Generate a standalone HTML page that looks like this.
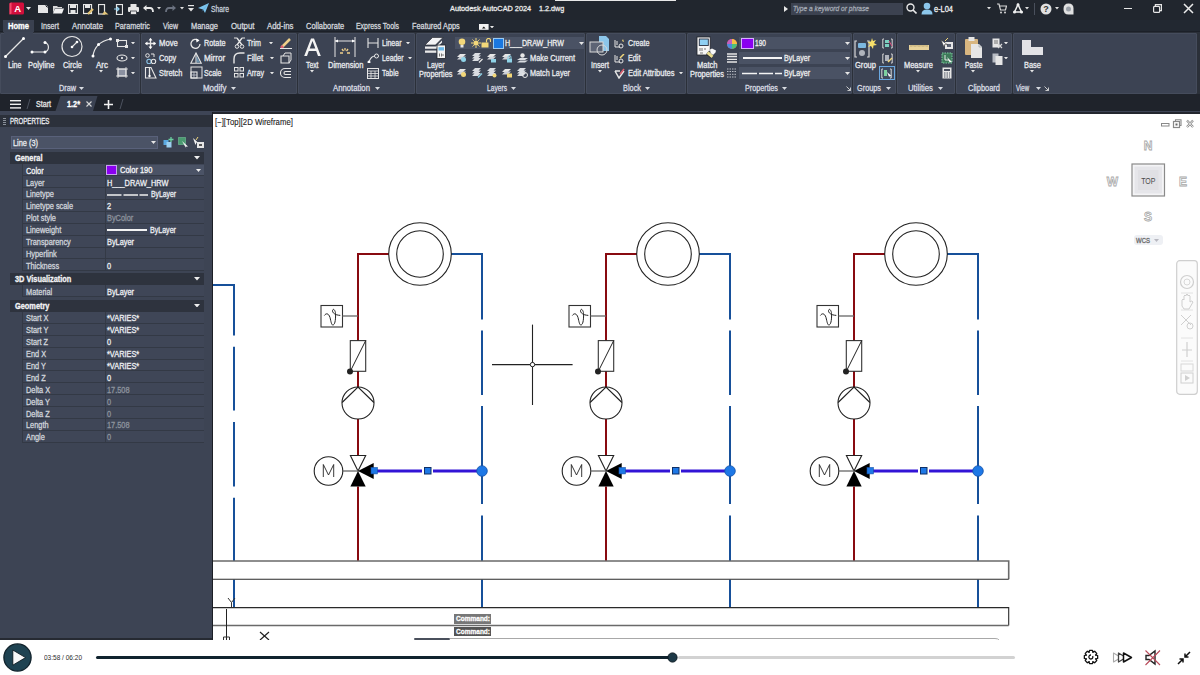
<!DOCTYPE html>
<html><head><meta charset="utf-8">
<style>
*{margin:0;padding:0;box-sizing:border-box}
html,body{width:1200px;height:675px;overflow:hidden;background:#fff;font-family:"Liberation Sans",sans-serif}
.a{position:absolute;display:block}
.t{position:absolute;white-space:nowrap;line-height:1;transform-origin:0 50%;-webkit-text-stroke:0.3px currentColor}
#vp{position:absolute;left:213px;top:114px;width:987px;height:526px;background:#fff;overflow:hidden}
</style></head><body>
<div class="a" style="left:0px;top:0px;width:1200px;height:20px;background:#21262e;"></div>
<svg class="a" style="left:9px;top:2px;" width="16" height="13" viewBox="0 0 16 13"><path d="M1.5,0.5 H13.5 Q15,0.5 15,2 V11 Q15,12.5 13.5,12.5 H1 L0.5,12 V1.5 Z" fill="#d20f3c"/><path d="M0.5,1.5 L2.5,0.5 V11.5 L0.5,12.5Z" fill="#f24a6c"/><text x="8.6" y="10" font-family="Liberation Sans" font-weight="bold" font-size="9.5" fill="#fff" text-anchor="middle">A</text></svg>
<svg class="a" style="left:25.5px;top:7.0px" width="5" height="3" viewBox="0 0 5 3"><polygon points="0,0 5,0 2.5,3" fill="#e8e8e8"/></svg>
<svg class="a" style="left:38px;top:5px;" width="10" height="8" viewBox="0 0 10 8"><path d="M0,0 H8 L10,2 V8 H0Z" fill="#e6e6e6"/><path d="M7.5,0.5 L9.5,2.5" stroke="#1f232b" stroke-width="1"/></svg>
<svg class="a" style="left:53px;top:5px;" width="11" height="9" viewBox="0 0 11 9"><path d="M0,1 H4 L5,2 H9 V3 H2 L0,8Z" fill="#d8d8d8"/><path d="M2,3.5 H11 L9,8.5 H0Z" fill="#f0f0f0"/></svg>
<svg class="a" style="left:68px;top:4px;" width="10" height="10" viewBox="0 0 10 10"><rect x="0.5" y="0.5" width="9" height="9" fill="none" stroke="#e6e6e6" stroke-width="1.2"/><rect x="2" y="1" width="6" height="3" fill="#e6e6e6"/><rect x="2.5" y="6" width="5" height="3.5" fill="#e6e6e6"/></svg>
<svg class="a" style="left:83px;top:4px;" width="11" height="11" viewBox="0 0 11 11"><rect x="0.5" y="0.5" width="8" height="9" fill="none" stroke="#e6e6e6" stroke-width="1.2"/><rect x="2" y="1" width="5" height="3" fill="#e6e6e6"/><path d="M5,10 L10,5" stroke="#e6c777" stroke-width="2.2"/></svg>
<svg class="a" style="left:98px;top:4px;" width="11" height="11" viewBox="0 0 11 11"><rect x="0.5" y="0.5" width="6" height="9.5" fill="none" stroke="#e6e6e6" stroke-width="1.2"/><path d="M4,10.5 L6.5,7 L10.5,10.5Z" fill="#e6c777"/></svg>
<svg class="a" style="left:114px;top:4px;" width="9" height="11" viewBox="0 0 9 11"><rect x="2.5" y="0.5" width="6" height="10" fill="none" stroke="#e6e6e6" stroke-width="1.2"/><path d="M0,5 H5 M3,3 L5,5 L3,7" stroke="#8fd0f0" stroke-width="1.2" fill="none"/></svg>
<svg class="a" style="left:128px;top:4px;" width="11" height="11" viewBox="0 0 11 11"><rect x="2.5" y="0" width="6" height="3" fill="#e6e6e6"/><rect x="0" y="3" width="11" height="5" rx="1" fill="#e6e6e6"/><rect x="2.5" y="7" width="6" height="3.5" fill="#e6e6e6" stroke="#1f232b" stroke-width="0.7"/></svg>
<svg class="a" style="left:143px;top:5px;" width="11" height="7" viewBox="0 0 11 7"><path d="M1,3 H7 Q10,3 10,7" stroke="#e8e8e8" stroke-width="1.8" fill="none"/><path d="M0,3 L3.5,0 V6Z" fill="#e8e8e8"/></svg>
<svg class="a" style="left:157.0px;top:7.2px" width="4" height="2.5" viewBox="0 0 4 2.5"><polygon points="0,0 4,0 2.0,2.5" fill="#e0e0e0"/></svg>
<svg class="a" style="left:165px;top:5px;" width="11" height="7" viewBox="0 0 11 7"><path d="M10,3 H4 Q1,3 1,7" stroke="#6b7280" stroke-width="1.8" fill="none"/><path d="M11,3 L7.5,0 V6Z" fill="#6b7280"/></svg>
<svg class="a" style="left:180.0px;top:7.2px" width="4" height="2.5" viewBox="0 0 4 2.5"><polygon points="0,0 4,0 2.0,2.5" fill="#e0e0e0"/></svg>
<svg class="a" style="left:188px;top:5px;" width="6" height="7" viewBox="0 0 6 7"><rect x="0" y="0" width="6" height="1.2" fill="#e6e6e6"/><polygon points="0,3 6,3 3,6.5" fill="#e6e6e6"/></svg>
<svg class="a" style="left:198px;top:3px;" width="11" height="11" viewBox="0 0 11 11"><path d="M0,5 L11,0 L7,10 L5,6.5Z" fill="#7cc4ee"/><path d="M5,6.5 L11,0 L3.5,9Z" fill="#4a9fd6"/></svg>
<div class="t" style="left:211.0px;top:4.66px;font-size:9px;color:#c6ceda;transform:scaleX(0.750);">Share</div>
<div class="t" style="left:450.0px;top:4.79px;font-size:7.9px;color:#ebebeb;transform:scaleX(0.930);">Autodesk AutoCAD 2024</div>
<div class="t" style="left:538.7px;top:4.79px;font-size:7.9px;color:#ebebeb;transform:scaleX(0.914);">1.2.dwg</div>
<div class="a" style="left:554.7px;top:0px;width:121.3px;height:1.2px;background:#e8e8e8;"></div>
<svg class="a" style="left:784px;top:6px;" width="4" height="6" viewBox="0 0 4 6"><polygon points="0,0 4,3 0,6" fill="#e6e6e6"/></svg>
<div class="a" style="left:791px;top:2.5px;width:111.5px;height:12.3px;background:#3c4250;"></div>
<div class="t" style="left:793.0px;top:4.74px;font-size:8px;color:#a3a9b3;font-style:italic;transform:scaleX(0.827);">Type a keyword or phrase</div>
<svg class="a" style="left:906px;top:3px;" width="11" height="11" viewBox="0 0 11 11"><circle cx="4.5" cy="4.5" r="3.5" fill="none" stroke="#e8e8e8" stroke-width="1.4"/><path d="M7,7 L10.5,10.5" stroke="#e8e8e8" stroke-width="1.6"/></svg>
<svg class="a" style="left:921px;top:2px;" width="12" height="13" viewBox="0 0 12 13"><circle cx="6" cy="4" r="3.3" fill="#8cc6ea"/><path d="M0.5,12.5 Q0.5,7.5 6,7.5 Q11.5,7.5 11.5,12.5Z" fill="#8cc6ea"/></svg>
<div class="t" style="left:934.0px;top:4.70px;font-size:8.5px;color:#f0f0f0;transform:scaleX(0.874);">e-L04</div>
<svg class="a" style="left:987.0px;top:7.2px" width="4" height="2.5" viewBox="0 0 4 2.5"><polygon points="0,0 4,0 2.0,2.5" fill="#e0e0e0"/></svg>
<svg class="a" style="left:997px;top:3px;" width="10" height="11" viewBox="0 0 10 11"><path d="M0,1 H2 L3.5,7 H8.5 L9.5,3 H3" stroke="#d8d8d8" stroke-width="1.2" fill="none"/><circle cx="4" cy="9.5" r="1" fill="#d8d8d8"/><circle cx="8" cy="9.5" r="1" fill="#d8d8d8"/></svg>
<svg class="a" style="left:1013px;top:3px;" width="10" height="11" viewBox="0 0 10 11"><path d="M5,1.5 L1.5,9 H8.5Z" stroke="#f0f0f0" stroke-width="1.5" fill="none"/><circle cx="5" cy="1.8" r="1.5" fill="#f0f0f0"/><circle cx="1.5" cy="9" r="1.5" fill="#f0f0f0"/><circle cx="8.5" cy="9" r="1.5" fill="#f0f0f0"/></svg>
<svg class="a" style="left:1025.0px;top:7.2px" width="4" height="2.5" viewBox="0 0 4 2.5"><polygon points="0,0 4,0 2.0,2.5" fill="#e0e0e0"/></svg>
<div class="a" style="left:1034px;top:3px;width:1px;height:12px;background:#4a505c;"></div>
<svg class="a" style="left:1040px;top:3px;" width="12" height="12" viewBox="0 0 12 12"><circle cx="6" cy="6" r="5.5" fill="#e0e0e0"/><text x="6" y="9.3" font-family="Liberation Sans" font-weight="bold" font-size="9" fill="#333" text-anchor="middle">?</text></svg>
<svg class="a" style="left:1055.0px;top:7.2px" width="4" height="2.5" viewBox="0 0 4 2.5"><polygon points="0,0 4,0 2.0,2.5" fill="#e0e0e0"/></svg>
<svg class="a" style="left:1063px;top:3px;" width="11" height="12" viewBox="0 0 11 12"><path d="M5.5,0.5 Q10.5,0.5 10.5,5.5 V11.5 H5.5 Q0.5,11.5 0.5,6 Q0.5,0.5 5.5,0.5Z" fill="#e0e0e0"/><circle cx="5.5" cy="6" r="2.5" fill="#9aa0a8"/></svg>
<div class="a" style="left:1124px;top:8px;width:8px;height:1.3px;background:#e6e6e6;"></div>
<svg class="a" style="left:1153px;top:4px;" width="9" height="9" viewBox="0 0 9 9"><rect x="0.6" y="2.4" width="6" height="6" rx="1" fill="none" stroke="#e6e6e6" stroke-width="1.2"/><path d="M2.4,2.4 V0.6 H8.4 V6.6 H6.6" fill="none" stroke="#e6e6e6" stroke-width="1.2"/></svg>
<svg class="a" style="left:1183px;top:3px;" width="11" height="11" viewBox="0 0 11 11"><path d="M1,1 L10,10 M10,1 L1,10" stroke="#ececec" stroke-width="1.5"/></svg>
<div class="a" style="left:0px;top:20px;width:1200px;height:12px;background:#222831;"></div>
<div class="a" style="left:0px;top:31px;width:1200px;height:1px;background:#1c2028;"></div>
<div class="a" style="left:2.5px;top:20px;width:31.5px;height:12px;background:#3a4150;"></div>
<div class="t" style="left:8.0px;top:22.00px;font-size:8.3px;color:#ffffff;font-weight:bold;transform:scaleX(0.911);">Home</div>
<div class="t" style="left:41.0px;top:22.00px;font-size:8.3px;color:#d2d6dc;transform:scaleX(0.867);">Insert</div>
<div class="t" style="left:72.0px;top:22.00px;font-size:8.3px;color:#d2d6dc;transform:scaleX(0.933);">Annotate</div>
<div class="t" style="left:115.0px;top:22.00px;font-size:8.3px;color:#d2d6dc;transform:scaleX(0.872);">Parametric</div>
<div class="t" style="left:163.0px;top:22.00px;font-size:8.3px;color:#d2d6dc;transform:scaleX(0.841);">View</div>
<div class="t" style="left:191.0px;top:22.00px;font-size:8.3px;color:#d2d6dc;transform:scaleX(0.900);">Manage</div>
<div class="t" style="left:230.5px;top:22.00px;font-size:8.3px;color:#d2d6dc;transform:scaleX(0.943);">Output</div>
<div class="t" style="left:266.6px;top:22.00px;font-size:8.3px;color:#d2d6dc;transform:scaleX(0.938);">Add-ins</div>
<div class="t" style="left:305.5px;top:22.00px;font-size:8.3px;color:#d2d6dc;transform:scaleX(0.898);">Collaborate</div>
<div class="t" style="left:356.0px;top:22.00px;font-size:8.3px;color:#d2d6dc;transform:scaleX(0.835);">Express Tools</div>
<div class="t" style="left:411.7px;top:22.00px;font-size:8.3px;color:#d2d6dc;transform:scaleX(0.884);">Featured Apps</div>
<svg class="a" style="left:478.5px;top:23.8px;" width="10" height="6" viewBox="0 0 10 6"><rect x="0" y="0" width="9.6" height="5.8" fill="#f2f2f2"/><polygon points="3,4.5 4.8,2.5 6.6,4.5" fill="#111"/></svg>
<svg class="a" style="left:490.0px;top:25.8px" width="4" height="2.5" viewBox="0 0 4 2.5"><polygon points="0,0 4,0 2.0,2.5" fill="#e8e8e8"/></svg>
<div class="a" style="left:0px;top:94px;width:1200px;height:17px;background:#1f232b;"></div>
<svg class="a" style="left:55px;top:96px;" width="43" height="15" viewBox="0 0 43 15"><polygon points="0.5,15 5.5,0 42.5,0 38,15" fill="#3b4252"/></svg>
<svg class="a" style="left:9.5px;top:99.5px;" width="11" height="9" viewBox="0 0 11 9"><rect x="0" y="0" width="11" height="1.4" fill="#f0f0f0"/><rect x="0" y="3.6" width="11" height="1.4" fill="#f0f0f0"/><rect x="0" y="7.2" width="11" height="1.4" fill="#f0f0f0"/></svg>
<svg class="a" style="left:26px;top:98px;" width="5" height="12" viewBox="0 0 5 12"><path d="M1,11 L4,1" stroke="#4d5360" stroke-width="1"/></svg>
<svg class="a" style="left:119px;top:98px;" width="5" height="12" viewBox="0 0 5 12"><path d="M1,11 L4,1" stroke="#4d5360" stroke-width="1"/></svg>
<div class="t" style="left:36.0px;top:99.90px;font-size:8.5px;color:#e6e6e6;transform:scaleX(0.836);">Start</div>
<div class="t" style="left:67.0px;top:99.90px;font-size:8.5px;color:#ffffff;font-weight:bold;transform:scaleX(0.860);">1.2*</div>
<svg class="a" style="left:85.5px;top:101px;" width="6" height="6" viewBox="0 0 6 6"><path d="M0.5,0.5 L5.5,5.5 M5.5,0.5 L0.5,5.5" stroke="#d8d8d8" stroke-width="1.1"/></svg>
<svg class="a" style="left:103.5px;top:99.5px;" width="9" height="9" viewBox="0 0 9 9"><path d="M4.5,0 V9 M0,4.5 H9" stroke="#f2f2f2" stroke-width="1.6"/></svg>
<div class="a" style="left:0px;top:111px;width:1200px;height:4px;background:#3e4556;"></div>
<div class="a" style="left:212px;top:112px;width:988px;height:2px;background:#23262e;"></div>

<div class="a" style="left:0px;top:32px;width:1200px;height:62px;background:#2b3039;"></div>
<div class="a" style="left:0px;top:32.5px;width:140px;height:61px;background:#3c4353;border:1px solid #454c5c;border-radius:1px"></div>
<div class="a" style="left:141px;top:32.5px;width:156px;height:61px;background:#3c4353;border:1px solid #454c5c;border-radius:1px"></div>
<div class="a" style="left:298px;top:32.5px;width:117px;height:61px;background:#3c4353;border:1px solid #454c5c;border-radius:1px"></div>
<div class="a" style="left:416px;top:32.5px;width:169px;height:61px;background:#3c4353;border:1px solid #454c5c;border-radius:1px"></div>
<div class="a" style="left:586px;top:32.5px;width:100px;height:61px;background:#3c4353;border:1px solid #454c5c;border-radius:1px"></div>
<div class="a" style="left:687px;top:32.5px;width:165px;height:61px;background:#3c4353;border:1px solid #454c5c;border-radius:1px"></div>
<div class="a" style="left:853px;top:32.5px;width:43px;height:61px;background:#3c4353;border:1px solid #454c5c;border-radius:1px"></div>
<div class="a" style="left:897px;top:32.5px;width:58px;height:61px;background:#3c4353;border:1px solid #454c5c;border-radius:1px"></div>
<div class="a" style="left:956px;top:32.5px;width:56px;height:61px;background:#3c4353;border:1px solid #454c5c;border-radius:1px"></div>
<div class="a" style="left:1013px;top:32.5px;width:184px;height:61px;background:#3c4353;border:1px solid #454c5c;border-radius:1px"></div>
<div class="a" style="left:3.5px;top:31.5px;width:29.5px;height:2.5px;background:#3c4353;"></div>
<svg class="a" style="left:3px;top:36px;" width="24" height="23" viewBox="0 0 24 23"><path d="M2.5,20.5 L20.5,2.5" stroke="#e6e6e6" stroke-width="1.2"/><circle cx="2.5" cy="20.5" r="1.5" fill="#fff"/><circle cx="20.5" cy="2.5" r="1.5" fill="#fff"/></svg>
<div class="t" style="left:7.5px;top:60.50px;font-size:8.3px;color:#e8eaee;transform:scaleX(0.860);">Line</div>
<svg class="a" style="left:30px;top:40px;" width="22" height="14" viewBox="0 0 22 14"><path d="M2,12 H15 A5,5 0 0 0 15,2.5" stroke="#e6e6e6" stroke-width="1.2" fill="none"/><circle cx="2" cy="12" r="1.5" fill="#fff"/><circle cx="15" cy="12" r="1.5" fill="#fff"/><circle cx="15" cy="2.5" r="1.5" fill="#fff"/></svg>
<div class="t" style="left:28.0px;top:60.50px;font-size:8.3px;color:#e8eaee;transform:scaleX(0.912);">Polyline</div>
<svg class="a" style="left:61px;top:35px;" width="22" height="23" viewBox="0 0 22 23"><circle cx="11" cy="11.5" r="10" stroke="#e6e6e6" stroke-width="1.2" fill="none"/><path d="M11,12 L16,7" stroke="#e6e6e6" stroke-width="1.1"/><circle cx="11" cy="12" r="1.3" fill="#fff"/><circle cx="16" cy="7" r="1.3" fill="#fff"/></svg>
<div class="t" style="left:63.0px;top:60.50px;font-size:8.3px;color:#e8eaee;transform:scaleX(0.896);">Circle</div>
<svg class="a" style="left:70.0px;top:70.0px" width="4" height="2.5" viewBox="0 0 4 2.5"><polygon points="0,0 4,0 2.0,2.5" fill="#e6e6e6"/></svg>
<svg class="a" style="left:91px;top:37px;" width="22" height="21" viewBox="0 0 22 21"><path d="M2,19 Q4,5 19.5,2" stroke="#e6e6e6" stroke-width="1.2" fill="none"/><circle cx="2" cy="19" r="1.5" fill="#fff"/><circle cx="7.5" cy="7.5" r="1.5" fill="#fff"/><circle cx="19.5" cy="2" r="1.5" fill="#fff"/></svg>
<div class="t" style="left:95.5px;top:60.50px;font-size:8.3px;color:#e8eaee;transform:scaleX(0.964);">Arc</div>
<svg class="a" style="left:99.0px;top:70.0px" width="4" height="2.5" viewBox="0 0 4 2.5"><polygon points="0,0 4,0 2.0,2.5" fill="#e6e6e6"/></svg>
<svg class="a" style="left:116px;top:39px;" width="12" height="9" viewBox="0 0 12 9"><rect x="1.5" y="1.5" width="9" height="6" stroke="#e6e6e6" stroke-width="1.1" fill="none"/><rect x="0" y="0" width="3" height="3" fill="#e6e6e6"/><rect x="9" y="6" width="3" height="3" fill="#e6e6e6"/></svg>
<svg class="a" style="left:116px;top:54px;" width="12" height="8" viewBox="0 0 12 8"><ellipse cx="6" cy="4" rx="5" ry="3" stroke="#e6e6e6" stroke-width="1.1" fill="none"/><circle cx="6" cy="4" r="1" fill="#fff"/></svg>
<svg class="a" style="left:116px;top:67px;" width="12" height="11" viewBox="0 0 12 11"><rect x="2" y="2" width="8" height="7" fill="#8a90a0" stroke="#e6e6e6" stroke-width="1"/><path d="M0,2 H12 M0,9 H12 M2,0 V11 M10,0 V11" stroke="#e6e6e6" stroke-width="0.8"/></svg>
<svg class="a" style="left:131.0px;top:41.8px" width="4" height="2.5" viewBox="0 0 4 2.5"><polygon points="0,0 4,0 2.0,2.5" fill="#e6e6e6"/></svg>
<svg class="a" style="left:131.0px;top:56.8px" width="4" height="2.5" viewBox="0 0 4 2.5"><polygon points="0,0 4,0 2.0,2.5" fill="#e6e6e6"/></svg>
<svg class="a" style="left:131.0px;top:71.8px" width="4" height="2.5" viewBox="0 0 4 2.5"><polygon points="0,0 4,0 2.0,2.5" fill="#e6e6e6"/></svg>
<div class="t" style="left:58.5px;top:84.00px;font-size:8.3px;color:#d9dce2;transform:scaleX(0.878);">Draw</div>
<svg class="a" style="left:79.0px;top:87.0px" width="5" height="3" viewBox="0 0 5 3"><polygon points="0,0 5,0 2.5,3" fill="#d9dce2"/></svg>
<svg class="a" style="left:145px;top:38px;" width="11" height="11" viewBox="0 0 11 11"><path d="M5.5,0.5 V10.5 M0.5,5.5 H10.5" stroke="#e6e6e6" stroke-width="1.3"/><path d="M5.5,0 L3.5,2.5 H7.5Z M5.5,11 L3.5,8.5 H7.5Z M0,5.5 L2.5,3.5 V7.5Z M11,5.5 L8.5,3.5 V7.5Z" fill="#fff"/></svg>
<div class="t" style="left:158.7px;top:39.30px;font-size:8.3px;color:#e8eaee;transform:scaleX(0.926);">Move</div>
<svg class="a" style="left:190px;top:38px;" width="11" height="11" viewBox="0 0 11 11"><path d="M8.5,2.5 A4.5,4.5 0 1 0 10,6" stroke="#e6e6e6" stroke-width="1.3" fill="none"/><path d="M6,0.5 L9.5,2.5 L6.5,4.5Z" fill="#fff"/></svg>
<div class="t" style="left:203.5px;top:39.30px;font-size:8.3px;color:#e8eaee;transform:scaleX(0.879);">Rotate</div>
<svg class="a" style="left:234px;top:37px;" width="11" height="12" viewBox="0 0 11 12"><path d="M0,1 H3 M8,1 H11" stroke="#e6e6e6" stroke-width="1"/><path d="M3,1 L8,8 M8,1 L3,8" stroke="#e6e6e6" stroke-width="1.3"/><circle cx="3" cy="9.5" r="1.8" stroke="#e6e6e6" fill="none"/><circle cx="8" cy="9.5" r="1.8" stroke="#e6e6e6" fill="none"/></svg>
<div class="t" style="left:247.0px;top:39.30px;font-size:8.3px;color:#e8eaee;transform:scaleX(0.860);">Trim</div>
<svg class="a" style="left:145px;top:53px;" width="12" height="11" viewBox="0 0 12 11"><circle cx="2.5" cy="2.5" r="1.8" stroke="#e6e6e6" stroke-width="1" fill="none"/><path d="M6,1 H9 V4" stroke="#e6e6e6" stroke-width="1" fill="none"/><circle cx="4" cy="8.5" r="2.2" stroke="#8cc6ea" stroke-width="1.1" fill="none"/><circle cx="8.5" cy="8.5" r="2.2" stroke="#e6e6e6" stroke-width="1.1" fill="none"/></svg>
<div class="t" style="left:158.7px;top:54.30px;font-size:8.3px;color:#e8eaee;transform:scaleX(0.893);">Copy</div>
<svg class="a" style="left:189.5px;top:52px;" width="12" height="12" viewBox="0 0 12 12"><path d="M0.8,11.2 L6,1 L11.2,11.2Z" fill="none" stroke="#e6e6e6" stroke-width="1.1"/><path d="M6,1.5 V11" stroke="#e6e6e6" stroke-width="1"/><path d="M6.5,4 L10,10.5 H6.5Z" fill="#8cc6ea" opacity="0.6"/></svg>
<div class="t" style="left:203.5px;top:54.30px;font-size:8.3px;color:#e8eaee;transform:scaleX(0.979);">Mirror</div>
<svg class="a" style="left:233px;top:52px;" width="12" height="12" viewBox="0 0 12 12"><path d="M1,11.5 V7 Q1,1 7,1 H11.5" stroke="#e6e6e6" stroke-width="1.4" fill="none"/></svg>
<div class="t" style="left:246.7px;top:54.30px;font-size:8.3px;color:#e8eaee;transform:scaleX(0.913);">Fillet</div>
<svg class="a" style="left:144px;top:66px;" width="13" height="13" viewBox="0 0 13 13"><path d="M1.5,1.5 H7 L12,12 H1.5Z" fill="none" stroke="#e6e6e6" stroke-width="1.1"/><path d="M5.5,2 V10" stroke="#e6e6e6" stroke-width="1.3"/><circle cx="5.5" cy="10" r="1.2" fill="#fff"/></svg>
<div class="t" style="left:158.7px;top:69.30px;font-size:8.3px;color:#e8eaee;transform:scaleX(0.886);">Stretch</div>
<svg class="a" style="left:189.5px;top:66px;" width="13" height="13" viewBox="0 0 13 13"><rect x="1" y="1" width="11" height="11" stroke="#e6e6e6" stroke-width="1" fill="none"/><rect x="1" y="6" width="6" height="6" stroke="#e6e6e6" stroke-width="1.1" fill="none"/><path d="M4,6 V12 M1,9 H7" stroke="#c8ccd4" stroke-width="0.8"/></svg>
<div class="t" style="left:203.5px;top:69.30px;font-size:8.3px;color:#e8eaee;transform:scaleX(0.843);">Scale</div>
<svg class="a" style="left:234px;top:67px;" width="10" height="11" viewBox="0 0 10 11"><rect x="0.5" y="0.5" width="3.5" height="3.5" stroke="#e6e6e6" fill="none"/><rect x="6" y="0.5" width="3.5" height="3.5" stroke="#e6e6e6" fill="none"/><rect x="0.5" y="6.5" width="3.5" height="3.5" stroke="#e6e6e6" fill="none"/><rect x="6" y="6.5" width="3.5" height="3.5" stroke="#e6e6e6" fill="none"/></svg>
<div class="t" style="left:247.0px;top:69.30px;font-size:8.3px;color:#e8eaee;transform:scaleX(0.857);">Array</div>
<svg class="a" style="left:268.5px;top:41.8px" width="4" height="2.5" viewBox="0 0 4 2.5"><polygon points="0,0 4,0 2.0,2.5" fill="#e6e6e6"/></svg>
<svg class="a" style="left:269.5px;top:56.8px" width="4" height="2.5" viewBox="0 0 4 2.5"><polygon points="0,0 4,0 2.0,2.5" fill="#e6e6e6"/></svg>
<svg class="a" style="left:269.5px;top:71.8px" width="4" height="2.5" viewBox="0 0 4 2.5"><polygon points="0,0 4,0 2.0,2.5" fill="#e6e6e6"/></svg>
<svg class="a" style="left:280px;top:37px;" width="12" height="12" viewBox="0 0 12 12"><path d="M2,10 L10,2" stroke="#f0d08a" stroke-width="2.5"/><path d="M1,11 L3,9" stroke="#e06070" stroke-width="2.5"/><path d="M0,11.5 H12" stroke="#e6e6e6" stroke-width="1"/></svg>
<svg class="a" style="left:280px;top:52px;" width="12" height="12" viewBox="0 0 12 12"><path d="M1,4 H9 V11 H1Z" stroke="#e6e6e6" stroke-width="1.1" fill="none"/><path d="M3,4 L5,1 H11 V8 L9,11" stroke="#e6e6e6" stroke-width="1" fill="none"/></svg>
<svg class="a" style="left:280px;top:67px;" width="12" height="12" viewBox="0 0 12 12"><path d="M11,1.5 H5 A4.5,4.5 0 0 0 5,10.5 H11 M11,4.5 H5.5 A1.5,1.5 0 0 0 5.5,7.5 H11" stroke="#e6e6e6" stroke-width="1.1" fill="none"/></svg>
<div class="t" style="left:203.3px;top:84.00px;font-size:8.3px;color:#d9dce2;transform:scaleX(0.957);">Modify</div>
<svg class="a" style="left:231.0px;top:87.0px" width="5" height="3" viewBox="0 0 5 3"><polygon points="0,0 5,0 2.5,3" fill="#d9dce2"/></svg>
<svg class="a" style="left:303px;top:37px;" width="19" height="21" viewBox="0 0 19 21"><path d="M1.2,19 L8,1.5 H11 L17.8,19 H15 L13.2,14 H5.8 L4,19Z M6.7,11.5 H12.3 L9.5,4Z" fill="#f4f4f4" fill-rule="evenodd"/></svg>
<div class="t" style="left:306.0px;top:60.50px;font-size:8.3px;color:#e8eaee;transform:scaleX(0.821);">Text</div>
<svg class="a" style="left:310.0px;top:70.0px" width="4" height="2.5" viewBox="0 0 4 2.5"><polygon points="0,0 4,0 2.0,2.5" fill="#e6e6e6"/></svg>
<svg class="a" style="left:334px;top:37px;" width="22" height="21" viewBox="0 0 22 21"><path d="M1,0 V20 M21,0 V20 M1,4 H21" stroke="#e6e6e6" stroke-width="1"/><path d="M1,4 L4,2.5 V5.5Z M21,4 L18,2.5 V5.5Z" fill="#fff"/><path d="M6,16 H9 M13,16 H16 M8,12 L9.5,14 M14,12 L12.5,14 M11,11 V13.5" stroke="#f0d08a" stroke-width="1.3"/></svg>
<div class="t" style="left:327.5px;top:60.50px;font-size:8.3px;color:#e8eaee;transform:scaleX(0.905);">Dimension</div>
<svg class="a" style="left:367px;top:38px;" width="12" height="10" viewBox="0 0 12 10"><path d="M1,0 V10 M11,0 V10 M1,5 H11" stroke="#e6e6e6" stroke-width="1.1"/></svg>
<div class="t" style="left:381.5px;top:39.30px;font-size:8.3px;color:#e8eaee;transform:scaleX(0.845);">Linear</div>
<svg class="a" style="left:367px;top:53px;" width="12" height="10" viewBox="0 0 12 10"><path d="M2,9 Q4,3 8,3" stroke="#e6e6e6" stroke-width="1.1" fill="none"/><circle cx="9.5" cy="3" r="2" stroke="#e6e6e6" fill="none"/><circle cx="2" cy="9" r="1.5" fill="#fff"/></svg>
<div class="t" style="left:381.5px;top:54.30px;font-size:8.3px;color:#e8eaee;transform:scaleX(0.832);">Leader</div>
<svg class="a" style="left:367px;top:68px;" width="12" height="11" viewBox="0 0 12 11"><rect x="0.5" y="0.5" width="11" height="10" stroke="#e6e6e6" stroke-width="1" fill="none"/><path d="M0.5,3 H11.5 M0.5,5.5 H11.5 M0.5,8 H11.5 M4,3 V10.5 M8,3 V10.5" stroke="#e6e6e6" stroke-width="0.8"/></svg>
<div class="t" style="left:381.5px;top:69.30px;font-size:8.3px;color:#e8eaee;transform:scaleX(0.832);">Table</div>
<svg class="a" style="left:406.0px;top:41.8px" width="4" height="2.5" viewBox="0 0 4 2.5"><polygon points="0,0 4,0 2.0,2.5" fill="#e6e6e6"/></svg>
<svg class="a" style="left:408.0px;top:56.8px" width="4" height="2.5" viewBox="0 0 4 2.5"><polygon points="0,0 4,0 2.0,2.5" fill="#e6e6e6"/></svg>
<div class="t" style="left:333.0px;top:84.00px;font-size:8.3px;color:#d9dce2;transform:scaleX(0.932);">Annotation</div>
<svg class="a" style="left:374.5px;top:87.0px" width="5" height="3" viewBox="0 0 5 3"><polygon points="0,0 5,0 2.5,3" fill="#d9dce2"/></svg>
<svg class="a" style="left:424px;top:36px;" width="22" height="23" viewBox="0 0 22 23"><polygon points="1,9 8.5,1.5 19,1.5 11.5,9" fill="#f2f2f4" stroke="#1e2128" stroke-width="0.6"/><polygon points="1,10.5 11.8,10.5 18,4.5 18,6.5 12.5,12.8 1,12.8" fill="#eeeeee"/><polygon points="1,14.5 12.5,14.5 12.5,16.8 1,16.8" fill="#e8e8e8"/><rect x="13" y="9" width="8.5" height="13.5" fill="#f4f4f4" stroke="#1e2128" stroke-width="0.8"/><rect x="14.5" y="11.2" width="5.5" height="3.3" fill="#6cb8e8"/><path d="M15.5,17.5 V20.5 M17.5,17.5 V20.5 M19,18 V20" stroke="#777" stroke-width="1"/></svg>
<div class="t" style="left:427.0px;top:60.50px;font-size:8.3px;color:#e8eaee;transform:scaleX(0.843);">Layer</div>
<div class="t" style="left:418.5px;top:69.50px;font-size:8.3px;color:#e8eaee;transform:scaleX(0.886);">Properties</div>
<div class="a" style="left:455px;top:36.7px;width:129px;height:12.5px;background:#4a5264;"></div>
<svg class="a" style="left:458px;top:38px;" width="9" height="10" viewBox="0 0 9 10"><circle cx="4" cy="3.8" r="3.3" fill="#f2d77a"/><rect x="2.5" y="7" width="3" height="2.5" fill="#e6e6e6"/></svg>
<svg class="a" style="left:471px;top:37.5px;" width="10" height="10" viewBox="0 0 10 10"><circle cx="5" cy="5" r="2.6" fill="#f2d77a"/><path d="M5,0 V2 M5,8 V10 M0,5 H2 M8,5 H10 M1.5,1.5 L2.8,2.8 M7.2,7.2 L8.5,8.5 M8.5,1.5 L7.2,2.8 M1.5,8.5 L2.8,7.2" stroke="#f2d77a" stroke-width="1"/></svg>
<svg class="a" style="left:481px;top:37.5px;" width="10" height="10" viewBox="0 0 10 10"><rect x="0.5" y="4.5" width="7" height="5" fill="#f2d77a"/><path d="M5.5,4.5 V2.5 A2,2 0 0 1 9.5,2.5 V4" stroke="#f2d77a" stroke-width="1.2" fill="none"/></svg>
<div class="a" style="left:494px;top:38.5px;width:8.5px;height:9px;background:#1a78e0;outline:1px solid #9ccaf0"></div>
<div class="t" style="left:505.0px;top:39.00px;font-size:8.3px;color:#eeeeee;transform:scaleX(0.853);">H___DRAW_HRW</div>
<svg class="a" style="left:578.5px;top:41.5px" width="5" height="3" viewBox="0 0 5 3"><polygon points="0,0 5,0 2.5,3" fill="#e6e6e6"/></svg>
<svg class="a" style="left:457px;top:53px;" width="10" height="10" viewBox="0 0 10 10"><path d="M0,4 L3,1 H9 L6,4Z" fill="#e6e6e6"/><path d="M0,6.5 L3,3.5 H9 L6,6.5Z" fill="#cfd2d8"/><circle cx="6.5" cy="6.5" r="2.5" fill="#8fd3e8"/></svg>
<svg class="a" style="left:472px;top:53px;" width="11" height="10" viewBox="0 0 11 10"><path d="M0,3 L3,0 H9 L6,3Z M0,5.5 L3,2.5 H9 L6,5.5Z M0,8 L3,5 H9 L6,8Z" fill="#dadde2"/><path d="M7,9.5 L10.5,6" stroke="#e6e6e6" stroke-width="1.2"/></svg>
<svg class="a" style="left:487px;top:53px;" width="10" height="10" viewBox="0 0 10 10"><path d="M0,4 L3,1 H9 L6,4Z" fill="#e6e6e6"/><path d="M0,6.5 L3,3.5 H9 L6,6.5Z" fill="#cfd2d8"/><rect x="4" y="6" width="5" height="3.5" fill="#8fd3e8"/></svg>
<svg class="a" style="left:502px;top:53px;" width="10" height="10" viewBox="0 0 10 10"><path d="M0,4 L3,1 H9 L6,4Z" fill="#e6e6e6"/><path d="M0,6.5 L3,3.5 H9 L6,6.5Z" fill="#cfd2d8"/><rect x="5" y="5.5" width="5" height="4" fill="#8fd3e8"/><path d="M6,5.5 V4 A1.5,1.5 0 0 1 9,4 V5.5" stroke="#8fd3e8" fill="none"/></svg>
<svg class="a" style="left:517px;top:52.5px;" width="11" height="11" viewBox="0 0 11 11"><circle cx="5.5" cy="2.5" r="2.2" fill="#e6e6e6"/><path d="M0,7 L3,5 H11 L8,7Z M0,9.5 L3,7.5 H11 L8,9.5Z" fill="#dadde2"/></svg>
<div class="t" style="left:530.0px;top:54.30px;font-size:8.3px;color:#e8eaee;transform:scaleX(0.895);">Make Current</div>
<svg class="a" style="left:457px;top:68px;" width="10" height="10" viewBox="0 0 10 10"><path d="M0,4 L3,1 H9 L6,4Z" fill="#e6e6e6"/><path d="M0,6.5 L3,3.5 H9 L6,6.5Z" fill="#cfd2d8"/><circle cx="6.5" cy="6.5" r="2.5" fill="#f2d77a"/></svg>
<svg class="a" style="left:472px;top:68px;" width="11" height="10" viewBox="0 0 11 10"><path d="M0,3 L3,0 H9 L6,3Z M0,5.5 L3,2.5 H9 L6,5.5Z M0,8 L3,5 H9 L6,8Z" fill="#dadde2"/><path d="M6,9.5 L10,5.5" stroke="#8fd3e8" stroke-width="1.2"/></svg>
<svg class="a" style="left:487px;top:68px;" width="10" height="10" viewBox="0 0 10 10"><path d="M0,3 L3,0 H9 L6,3Z M0,5.5 L3,2.5 H9 L6,5.5Z M0,8 L3,5 H9 L6,8Z" fill="#dadde2"/><circle cx="7.5" cy="7.5" r="2" fill="#f2d77a"/></svg>
<svg class="a" style="left:502px;top:68px;" width="10" height="10" viewBox="0 0 10 10"><path d="M0,4 L3,1 H9 L6,4Z" fill="#e6e6e6"/><path d="M0,6.5 L3,3.5 H9 L6,6.5Z" fill="#cfd2d8"/><rect x="5" y="5.5" width="5" height="4" fill="#f2d77a"/></svg>
<svg class="a" style="left:517px;top:68px;" width="11" height="10" viewBox="0 0 11 10"><path d="M0,3 L3,0 H9 L6,3Z M0,5.5 L3,2.5 H9 L6,5.5Z M0,8 L3,5 H9 L6,8Z" fill="#dadde2"/><circle cx="8" cy="7" r="2.5" stroke="#e6e6e6" fill="none"/></svg>
<div class="t" style="left:530.0px;top:69.30px;font-size:8.3px;color:#e8eaee;transform:scaleX(0.876);">Match Layer</div>
<div class="t" style="left:486.5px;top:84.00px;font-size:8.3px;color:#d9dce2;transform:scaleX(0.803);">Layers</div>
<svg class="a" style="left:510.5px;top:87.0px" width="5" height="3" viewBox="0 0 5 3"><polygon points="0,0 5,0 2.5,3" fill="#d9dce2"/></svg>
<svg class="a" style="left:589px;top:35px;" width="21" height="22" viewBox="0 0 21 22"><path d="M10,1 H17 L20,4 V16 H10Z" fill="#8cc6ea"/><rect x="1" y="7" width="13" height="10" fill="#5d6475" stroke="#d8d8d8" stroke-width="1"/><circle cx="13" cy="15" r="5" stroke="#d8d8d8" stroke-width="1" fill="none"/></svg>
<div class="t" style="left:590.5px;top:60.50px;font-size:8.3px;color:#e8eaee;transform:scaleX(0.867);">Insert</div>
<svg class="a" style="left:598.0px;top:70.0px" width="4" height="2.5" viewBox="0 0 4 2.5"><polygon points="0,0 4,0 2.0,2.5" fill="#e6e6e6"/></svg>
<svg class="a" style="left:614px;top:39px;" width="11" height="10" viewBox="0 0 11 10"><path d="M1,1 V8 H6 M3,2 V6" stroke="#e6e6e6" fill="none"/><circle cx="7" cy="7" r="2" stroke="#e6e6e6" fill="none"/><path d="M9,0 L10,3 L8,2Z" fill="#f2d77a"/></svg>
<div class="t" style="left:627.5px;top:39.30px;font-size:8.3px;color:#e8eaee;transform:scaleX(0.863);">Create</div>
<svg class="a" style="left:614px;top:54px;" width="11" height="10" viewBox="0 0 11 10"><path d="M1,1 V8 H6 M3,2 V6" stroke="#e6e6e6" fill="none"/><circle cx="7" cy="7" r="2" stroke="#e6e6e6" fill="none"/><path d="M6,4 L10,0" stroke="#f2d77a" stroke-width="1.5"/></svg>
<div class="t" style="left:627.5px;top:54.30px;font-size:8.3px;color:#e8eaee;transform:scaleX(0.874);">Edit</div>
<svg class="a" style="left:614px;top:68px;" width="11" height="11" viewBox="0 0 11 11"><path d="M1,3 L5,10 L10,3 M1,3 H6" stroke="#e6e6e6" stroke-width="1.5" fill="none"/><path d="M6,6 L10,1" stroke="#e06070" stroke-width="1.5"/></svg>
<div class="t" style="left:627.5px;top:69.30px;font-size:8.3px;color:#e8eaee;transform:scaleX(0.908);">Edit Attributes</div>
<svg class="a" style="left:679.0px;top:71.8px" width="4" height="2.5" viewBox="0 0 4 2.5"><polygon points="0,0 4,0 2.0,2.5" fill="#e6e6e6"/></svg>
<div class="t" style="left:623.0px;top:84.00px;font-size:8.3px;color:#d9dce2;transform:scaleX(0.887);">Block</div>
<svg class="a" style="left:644.5px;top:87.0px" width="5" height="3" viewBox="0 0 5 3"><polygon points="0,0 5,0 2.5,3" fill="#d9dce2"/></svg>
<svg class="a" style="left:696px;top:36px;" width="22" height="23" viewBox="0 0 22 23"><rect x="1" y="1" width="13.2" height="18" fill="#f6f6f6" stroke="#1e2128" stroke-width="0.8"/><rect x="3.3" y="3" width="9" height="6.5" fill="#8fd0f4" stroke="#2a3040" stroke-width="0.9"/><path d="M4,12 V15 M6,12 V15 M8,13 H10 M4,17 H7" stroke="#666" stroke-width="0.9"/><path d="M11.5,16.5 L16.5,20.8" stroke="#1e2128" stroke-width="4.5"/><path d="M11.5,16.5 L16.5,20.8" stroke="#e8dc90" stroke-width="3"/><polygon points="14,13.5 16,12.5 20,14.5 19.5,16.5 17,19 14.5,17" fill="#f8f8f8"/></svg>
<div class="t" style="left:696.5px;top:60.50px;font-size:8.3px;color:#e8eaee;transform:scaleX(0.907);">Match</div>
<div class="t" style="left:689.5px;top:69.50px;font-size:8.3px;color:#e8eaee;transform:scaleX(0.899);">Properties</div>
<svg class="a" style="left:727px;top:38.5px;" width="10" height="10" viewBox="0 0 10 10"><circle cx="5" cy="5" r="5" fill="#e8555a"/><path d="M5,5 L5,0 A5,5 0 0 1 10,5Z" fill="#f4c044"/><path d="M5,5 L10,5 A5,5 0 0 1 5,10Z" fill="#4fc078"/><path d="M5,5 L5,10 A5,5 0 0 1 0,5Z" fill="#4a8ee0"/><path d="M5,5 L0,5 A5,5 0 0 1 5,0Z" fill="#c060c0"/></svg>
<svg class="a" style="left:727px;top:53px;" width="10" height="10" viewBox="0 0 10 10"><path d="M0,1 H10 M0,3.5 H10 M0,6.3 H10 M0,9 H10" stroke="#e6e6e6" stroke-width="1.3"/></svg>
<svg class="a" style="left:727px;top:68px;" width="10" height="10" viewBox="0 0 10 10"><path d="M0,1 H10 M0,3.5 H10 M0,6.3 H10 M0,9 H10" stroke="#b8bcc4" stroke-width="1" stroke-dasharray="1.5 1"/></svg>
<div class="a" style="left:739px;top:37.2px;width:111px;height:11.5px;background:#4a5264;"></div>
<svg class="a" style="left:844.5px;top:41.5px" width="5" height="3" viewBox="0 0 5 3"><polygon points="0,0 5,0 2.5,3" fill="#e6e6e6"/></svg>
<div class="a" style="left:739px;top:52.4px;width:111px;height:11.5px;background:#4a5264;"></div>
<svg class="a" style="left:844.5px;top:56.7px" width="5" height="3" viewBox="0 0 5 3"><polygon points="0,0 5,0 2.5,3" fill="#e6e6e6"/></svg>
<div class="a" style="left:739px;top:67.3px;width:111px;height:11.5px;background:#4a5264;"></div>
<svg class="a" style="left:844.5px;top:71.6px" width="5" height="3" viewBox="0 0 5 3"><polygon points="0,0 5,0 2.5,3" fill="#e6e6e6"/></svg>
<div class="a" style="left:742px;top:39px;width:11px;height:9px;background:#8a00f0;outline:1px solid #d8b0ff"></div>
<div class="t" style="left:755.0px;top:39.00px;font-size:8.3px;color:#eeeeee;transform:scaleX(0.794);">190</div>
<div class="a" style="left:742.5px;top:57.2px;width:39.5px;height:2.2px;background:#f4f4f4;"></div>
<div class="t" style="left:783.5px;top:54.30px;font-size:8.3px;color:#eeeeee;transform:scaleX(0.854);">ByLayer</div>
<svg class="a" style="left:742px;top:72px;" width="41" height="3" viewBox="0 0 41 3"><path d="M0,1.5 H15 M17,1.5 H31 M33,1.5 H40" stroke="#f4f4f4" stroke-width="1.3"/></svg>
<div class="t" style="left:783.5px;top:69.00px;font-size:8.3px;color:#eeeeee;transform:scaleX(0.854);">ByLayer</div>
<div class="t" style="left:745.0px;top:84.00px;font-size:8.3px;color:#d9dce2;transform:scaleX(0.872);">Properties</div>
<svg class="a" style="left:781.5px;top:87.0px" width="5" height="3" viewBox="0 0 5 3"><polygon points="0,0 5,0 2.5,3" fill="#d9dce2"/></svg>
<svg class="a" style="left:846px;top:86px;" width="5" height="5" viewBox="0 0 5 5"><path d="M0.5,0.5 L4.5,4.5 M4.5,1.5 V4.5 H1.5" stroke="#d8d8d8" stroke-width="0.9" fill="none"/></svg>
<svg class="a" style="left:854px;top:37px;" width="24" height="22" viewBox="0 0 24 22"><path d="M3,4 H1 V20 H3 M13,4 H15 V20 H13" stroke="#d8d8d8" stroke-width="1.2" fill="none"/><rect x="4" y="6" width="8" height="5" rx="1" fill="#7cb8e0"/><circle cx="8" cy="16" r="3" fill="#b0b4bc"/><path d="M18,1 L19,4 L22,3 L20,6 L23,8 L19.5,8.5 L19,12 L17,9 L14,10 L16,7 L13.5,5 L17,4.5Z" fill="#f8e06a"/></svg>
<div class="t" style="left:855.0px;top:61.00px;font-size:8.3px;color:#e8eaee;transform:scaleX(0.910);">Group</div>
<svg class="a" style="left:882px;top:38px;" width="11" height="11" viewBox="0 0 11 11"><path d="M2,1 H0.8 V10 H2 M9,1 H10.2 V10 H9" stroke="#d8d8d8" fill="none"/><rect x="3" y="2" width="4" height="3" fill="#7cd0c0"/><rect x="3" y="6" width="4" height="3" fill="#7cd0c0"/><path d="M7,3 L10,8" stroke="#e05080" stroke-width="1"/></svg>
<svg class="a" style="left:882px;top:53px;" width="11" height="11" viewBox="0 0 11 11"><path d="M2,1 H0.8 V10 H2 M9,1 H10.2 V10 H9" stroke="#d8d8d8" fill="none"/><rect x="3" y="2" width="4" height="6" fill="#b0b4bc"/><path d="M6,9 L10,5" stroke="#f2d77a" stroke-width="1.5"/></svg>
<div class="a" style="left:878.5px;top:66px;width:16px;height:14px;background:transparent;border:1px solid #6aa8e0;background:#3f4a5e"></div>
<svg class="a" style="left:881px;top:68px;" width="11" height="11" viewBox="0 0 11 11"><path d="M2,1 H0.8 V10 H2 M9,1 H10.2 V10 H9" stroke="#d8d8d8" fill="none"/><rect x="3" y="2" width="3" height="6" fill="#7cd0a0"/><path d="M6,4 L10.5,8 L8,8.5 L9,11 Z" fill="#fff"/></svg>
<div class="t" style="left:857.0px;top:84.00px;font-size:8.3px;color:#d9dce2;transform:scaleX(0.882);">Groups</div>
<svg class="a" style="left:885.5px;top:87.0px" width="5" height="3" viewBox="0 0 5 3"><polygon points="0,0 5,0 2.5,3" fill="#d9dce2"/></svg>
<svg class="a" style="left:909px;top:44px;" width="20" height="7" viewBox="0 0 20 7"><rect x="0" y="1" width="20" height="5" fill="#e8d29a"/><path d="M2,1 V3 M4,1 V2.5 M6,1 V3 M8,1 V2.5 M10,1 V3 M12,1 V2.5 M14,1 V3 M16,1 V2.5 M18,1 V3" stroke="#9c8a5a" stroke-width="0.6"/></svg>
<div class="t" style="left:903.5px;top:60.50px;font-size:8.3px;color:#e8eaee;transform:scaleX(0.898);">Measure</div>
<svg class="a" style="left:916.0px;top:70.0px" width="4" height="2.5" viewBox="0 0 4 2.5"><polygon points="0,0 4,0 2.0,2.5" fill="#e6e6e6"/></svg>
<svg class="a" style="left:941px;top:38px;" width="12" height="11" viewBox="0 0 12 11"><rect x="4" y="4" width="8" height="7" fill="#e6e6e6"/><rect x="6" y="6" width="4" height="3" fill="#5d6475"/><path d="M0,2 L3,9 L4,6 L7,7Z" fill="#fff" stroke="#333" stroke-width="0.5"/><path d="M7,0 L4,3" stroke="#f2d77a" stroke-width="1"/></svg>
<svg class="a" style="left:941px;top:52px;" width="12" height="12" viewBox="0 0 12 12"><rect x="1" y="1" width="10" height="10" fill="#3e7a5a" stroke="#7cd0a0" stroke-dasharray="1.5 1"/><path d="M4,3 V8 H8" stroke="#e6e6e6" fill="none"/><path d="M6,5 L11,10 L8.5,10.2 L9.5,12Z" fill="#fff"/></svg>
<svg class="a" style="left:942px;top:67px;" width="10" height="12" viewBox="0 0 10 12"><rect x="0.5" y="0.5" width="9" height="11" fill="#e6e6e6"/><rect x="2" y="2" width="6" height="2" fill="#4a5060"/><path d="M2,6 H3.5 M4.5,6 H6 M7,6 H8 M2,8 H3.5 M4.5,8 H6 M7,8 H8 M2,10 H3.5 M4.5,10 H6 M7,10 H8" stroke="#4a5060" stroke-width="1"/></svg>
<div class="t" style="left:908.0px;top:84.00px;font-size:8.3px;color:#d9dce2;transform:scaleX(0.935);">Utilities</div>
<svg class="a" style="left:937.5px;top:87.0px" width="5" height="3" viewBox="0 0 5 3"><polygon points="0,0 5,0 2.5,3" fill="#d9dce2"/></svg>
<svg class="a" style="left:964px;top:36px;" width="19" height="23" viewBox="0 0 19 23"><rect x="1" y="3" width="13" height="16" rx="1" fill="#d8b680"/><rect x="4.5" y="1" width="6" height="4" fill="#e6e6e6"/><path d="M7,8 H15 L18,11 V22 H7Z" fill="#e6e6e6"/><path d="M15,8 V11 H18" stroke="#9aa0a8" fill="none" stroke-width="0.7"/></svg>
<div class="t" style="left:964.5px;top:60.50px;font-size:8.3px;color:#e8eaee;transform:scaleX(0.825);">Paste</div>
<svg class="a" style="left:971.0px;top:70.0px" width="4" height="2.5" viewBox="0 0 4 2.5"><polygon points="0,0 4,0 2.0,2.5" fill="#e6e6e6"/></svg>
<svg class="a" style="left:992px;top:38px;" width="11" height="11" viewBox="0 0 11 11"><rect x="0.5" y="0.5" width="7" height="9" fill="#e6e6e6"/><path d="M2,3 H6 M2,5 H6" stroke="#555" stroke-width="0.8"/><path d="M6,6 L10,10 M10,6 L6,10" stroke="#d8d8d8" stroke-width="1.2"/></svg>
<svg class="a" style="left:992px;top:53px;" width="11" height="12" viewBox="0 0 11 12"><rect x="0.5" y="0.5" width="6" height="9" fill="#b8bcc4"/><rect x="3.5" y="3" width="7" height="9" fill="#e6e6e6"/></svg>
<svg class="a" style="left:1004.0px;top:41.8px" width="4" height="2.5" viewBox="0 0 4 2.5"><polygon points="0,0 4,0 2.0,2.5" fill="#e6e6e6"/></svg>
<svg class="a" style="left:1004.0px;top:56.8px" width="4" height="2.5" viewBox="0 0 4 2.5"><polygon points="0,0 4,0 2.0,2.5" fill="#e6e6e6"/></svg>
<div class="t" style="left:968.0px;top:84.00px;font-size:8.3px;color:#d9dce2;transform:scaleX(0.901);">Clipboard</div>
<svg class="a" style="left:1021px;top:39px;" width="23" height="17" viewBox="0 0 23 17"><path d="M1,1 H10 V8 H22 V16 H1Z" fill="#e2e2e6"/></svg>
<div class="t" style="left:1024.0px;top:60.50px;font-size:8.3px;color:#e8eaee;transform:scaleX(0.899);">Base</div>
<svg class="a" style="left:1030.0px;top:70.0px" width="4" height="2.5" viewBox="0 0 4 2.5"><polygon points="0,0 4,0 2.0,2.5" fill="#e6e6e6"/></svg>
<div class="t" style="left:1016.0px;top:84.00px;font-size:8.3px;color:#d9dce2;transform:scaleX(0.729);">View</div>
<svg class="a" style="left:1035.5px;top:87.0px" width="5" height="3" viewBox="0 0 5 3"><polygon points="0,0 5,0 2.5,3" fill="#d9dce2"/></svg>
<svg class="a" style="left:1044px;top:86px;" width="5" height="5" viewBox="0 0 5 5"><path d="M0.5,0.5 L4.5,4.5 M4.5,1.5 V4.5 H1.5" stroke="#d8d8d8" stroke-width="0.9" fill="none"/></svg>

<div class="a" style="left:0px;top:115px;width:212px;height:525px;background:#3d4454;"></div>
<div class="a" style="left:212px;top:112px;width:1px;height:528px;background:#1c1f26;"></div>
<div class="a" style="left:0px;top:115px;width:211.5px;height:12.3px;background:#2c313b;"></div>
<svg class="a" style="left:3px;top:118px;" width="3" height="8" viewBox="0 0 3 8"><path d="M0,0.5 H3 M0,2.5 H3 M0,4.5 H3 M0,6.5 H3" stroke="#8a909a" stroke-width="1"/></svg>
<div class="t" style="left:9.6px;top:116.75px;font-size:8.6px;color:#eceef2;transform:scaleX(0.713);">PROPERTIES</div>
<div class="a" style="left:11px;top:136px;width:147px;height:13px;background:#4b5366;border:1px solid #59617a"></div>
<div class="t" style="left:13.0px;top:138.60px;font-size:8.3px;color:#e8eaee;transform:scaleX(0.888);">Line (3)</div>
<svg class="a" style="left:151.0px;top:141.2px" width="5" height="3" viewBox="0 0 5 3"><polygon points="0,0 5,0 2.5,3" fill="#e6e6e6"/></svg>
<svg class="a" style="left:163px;top:137px;" width="11" height="11" viewBox="0 0 11 11"><rect x="0.5" y="3" width="5" height="5" fill="#5aa8e0"/><rect x="3.5" y="5" width="5" height="5.5" fill="#9cd0f0"/><path d="M8,0 V5 M5.5,2.5 H10.5" stroke="#6ad0a0" stroke-width="1.3"/></svg>
<svg class="a" style="left:178px;top:137px;" width="11" height="12" viewBox="0 0 11 12"><rect x="0.5" y="0.5" width="7" height="7" fill="#4a9a70" stroke="#7cd0a0" stroke-dasharray="1 1"/><path d="M4,4 L10,9.5 L7.5,9.8 L8.5,12Z" fill="#f2f2f2"/></svg>
<svg class="a" style="left:193px;top:137px;" width="11" height="11" viewBox="0 0 11 11"><path d="M0,1 L2.5,8 L3.5,5.5 L6,6.5Z" fill="#f2f2f2"/><rect x="4" y="5" width="7" height="6" fill="#e6e6e6"/><rect x="6" y="7" width="3" height="2" fill="#555"/><path d="M5,0 L3,3" stroke="#f2d77a"/></svg>
<div class="a" style="left:10px;top:152px;width:193.6px;height:12px;background:#2e333e;"></div>
<div class="t" style="left:15.0px;top:154.85px;font-size:8.2px;color:#f4f4f6;font-weight:bold;transform:scaleX(0.900);">General</div>
<svg class="a" style="left:193.5px;top:156.2px" width="6" height="3.5" viewBox="0 0 6 3.5"><polygon points="0,0 6,0 3.0,3.5" fill="#eeeeee"/></svg>
<div class="a" style="left:21.5px;top:164px;width:182.1px;height:107.10000000000001px;background:#3f4657;border-left:1px solid #333945;"></div>
<div class="a" style="left:104.5px;top:164px;width:1px;height:107.10000000000001px;background:#343a46;"></div>
<div class="a" style="left:22.5px;top:175.1px;width:181.1px;height:0.9px;background:#333945;"></div>
<div class="t" style="left:25.5px;top:167.65px;font-size:8.2px;color:#f2f2f4;transform:scaleX(0.900);">Color</div>
<div class="a" style="left:22.5px;top:187.0px;width:181.1px;height:0.9px;background:#333945;"></div>
<div class="t" style="left:25.5px;top:179.55px;font-size:8.2px;color:#cfd3da;transform:scaleX(0.900);">Layer</div>
<div class="t" style="left:106.5px;top:179.55px;font-size:8.2px;color:#eceef2;transform:scaleX(0.900);">H___DRAW_HRW</div>
<div class="a" style="left:22.5px;top:198.9px;width:181.1px;height:0.9px;background:#333945;"></div>
<div class="t" style="left:25.5px;top:191.45px;font-size:8.2px;color:#cfd3da;transform:scaleX(0.900);">Linetype</div>
<div class="a" style="left:22.5px;top:210.79999999999998px;width:181.1px;height:0.9px;background:#333945;"></div>
<div class="t" style="left:25.5px;top:203.35px;font-size:8.2px;color:#cfd3da;transform:scaleX(0.900);">Linetype scale</div>
<div class="t" style="left:106.5px;top:203.35px;font-size:8.2px;color:#eceef2;transform:scaleX(0.900);">2</div>
<div class="a" style="left:22.5px;top:222.7px;width:181.1px;height:0.9px;background:#333945;"></div>
<div class="t" style="left:25.5px;top:215.25px;font-size:8.2px;color:#cfd3da;transform:scaleX(0.900);">Plot style</div>
<div class="t" style="left:106.5px;top:215.25px;font-size:8.2px;color:#8c929c;transform:scaleX(0.900);">ByColor</div>
<div class="a" style="left:22.5px;top:234.6px;width:181.1px;height:0.9px;background:#333945;"></div>
<div class="t" style="left:25.5px;top:227.15px;font-size:8.2px;color:#cfd3da;transform:scaleX(0.900);">Lineweight</div>
<div class="a" style="left:22.5px;top:246.5px;width:181.1px;height:0.9px;background:#333945;"></div>
<div class="t" style="left:25.5px;top:239.05px;font-size:8.2px;color:#cfd3da;transform:scaleX(0.900);">Transparency</div>
<div class="t" style="left:106.5px;top:239.05px;font-size:8.2px;color:#eceef2;transform:scaleX(0.900);">ByLayer</div>
<div class="a" style="left:22.5px;top:258.4px;width:181.1px;height:0.9px;background:#333945;"></div>
<div class="t" style="left:25.5px;top:250.95px;font-size:8.2px;color:#cfd3da;transform:scaleX(0.900);">Hyperlink</div>
<div class="a" style="left:22.5px;top:270.29999999999995px;width:181.1px;height:0.9px;background:#333945;"></div>
<div class="t" style="left:25.5px;top:262.85px;font-size:8.2px;color:#cfd3da;transform:scaleX(0.900);">Thickness</div>
<div class="t" style="left:106.5px;top:262.85px;font-size:8.2px;color:#eceef2;transform:scaleX(0.900);">0</div>
<div class="a" style="left:105.5px;top:164.8px;width:98px;height:10.4px;background:#4b5366;"></div>
<div class="a" style="left:106.5px;top:166px;width:9px;height:8px;background:#8a00f0;outline:1px solid #c8a0f0"></div>
<div class="t" style="left:119.5px;top:167.35px;font-size:8.2px;color:#f2f2f4;transform:scaleX(0.914);">Color 190</div>
<svg class="a" style="left:196.0px;top:168.8px" width="5" height="3" viewBox="0 0 5 3"><polygon points="0,0 5,0 2.5,3" fill="#eeeeee"/></svg>
<svg class="a" style="left:106.5px;top:193.5px;" width="42" height="2" viewBox="0 0 42 2"><path d="M0,1 H14.5 M16.5,1 H31 M32.5,1 H41" stroke="#f0f0f0" stroke-width="1.4"/></svg>
<div class="t" style="left:151.0px;top:191.35px;font-size:8.2px;color:#eceef2;transform:scaleX(0.831);">ByLayer</div>
<div class="a" style="left:106.5px;top:228.7px;width:40px;height:2px;background:#f4f4f4;"></div>
<div class="t" style="left:150.0px;top:227.05px;font-size:8.2px;color:#eceef2;transform:scaleX(0.864);">ByLayer</div>
<div class="a" style="left:10px;top:272.8px;width:193.6px;height:12px;background:#2e333e;"></div>
<div class="t" style="left:15.0px;top:275.65px;font-size:8.2px;color:#f4f4f6;font-weight:bold;transform:scaleX(0.900);">3D Visualization</div>
<svg class="a" style="left:193.5px;top:277.1px" width="6" height="3.5" viewBox="0 0 6 3.5"><polygon points="0,0 6,0 3.0,3.5" fill="#eeeeee"/></svg>
<div class="a" style="left:21.5px;top:284.9px;width:182.1px;height:11.9px;background:#3f4657;border-left:1px solid #333945;"></div>
<div class="a" style="left:104.5px;top:284.9px;width:1px;height:11.9px;background:#343a46;"></div>
<div class="a" style="left:22.5px;top:295.99999999999994px;width:181.1px;height:0.9px;background:#333945;"></div>
<div class="t" style="left:25.5px;top:288.55px;font-size:8.2px;color:#cfd3da;transform:scaleX(0.900);">Material</div>
<div class="t" style="left:106.5px;top:288.55px;font-size:8.2px;color:#eceef2;transform:scaleX(0.900);">ByLayer</div>
<div class="a" style="left:10px;top:299.7px;width:193.6px;height:12px;background:#2e333e;"></div>
<div class="t" style="left:15.0px;top:302.55px;font-size:8.2px;color:#f4f4f6;font-weight:bold;transform:scaleX(0.900);">Geometry</div>
<svg class="a" style="left:193.5px;top:303.9px" width="6" height="3.5" viewBox="0 0 6 3.5"><polygon points="0,0 6,0 3.0,3.5" fill="#eeeeee"/></svg>
<div class="a" style="left:21.5px;top:311.7px;width:182.1px;height:130.9px;background:#3f4657;border-left:1px solid #333945;"></div>
<div class="a" style="left:104.5px;top:311.7px;width:1px;height:130.9px;background:#343a46;"></div>
<div class="a" style="left:22.5px;top:322.79999999999995px;width:181.1px;height:0.9px;background:#333945;"></div>
<div class="t" style="left:25.5px;top:315.35px;font-size:8.2px;color:#cfd3da;transform:scaleX(0.900);">Start X</div>
<div class="t" style="left:106.5px;top:315.35px;font-size:8.2px;color:#eceef2;transform:scaleX(0.900);">*VARIES*</div>
<div class="a" style="left:22.5px;top:334.69999999999993px;width:181.1px;height:0.9px;background:#333945;"></div>
<div class="t" style="left:25.5px;top:327.25px;font-size:8.2px;color:#cfd3da;transform:scaleX(0.900);">Start Y</div>
<div class="t" style="left:106.5px;top:327.25px;font-size:8.2px;color:#eceef2;transform:scaleX(0.900);">*VARIES*</div>
<div class="a" style="left:22.5px;top:346.59999999999997px;width:181.1px;height:0.9px;background:#333945;"></div>
<div class="t" style="left:25.5px;top:339.15px;font-size:8.2px;color:#cfd3da;transform:scaleX(0.900);">Start Z</div>
<div class="t" style="left:106.5px;top:339.15px;font-size:8.2px;color:#eceef2;transform:scaleX(0.900);">0</div>
<div class="a" style="left:22.5px;top:358.49999999999994px;width:181.1px;height:0.9px;background:#333945;"></div>
<div class="t" style="left:25.5px;top:351.05px;font-size:8.2px;color:#cfd3da;transform:scaleX(0.900);">End X</div>
<div class="t" style="left:106.5px;top:351.05px;font-size:8.2px;color:#eceef2;transform:scaleX(0.900);">*VARIES*</div>
<div class="a" style="left:22.5px;top:370.4px;width:181.1px;height:0.9px;background:#333945;"></div>
<div class="t" style="left:25.5px;top:362.95px;font-size:8.2px;color:#cfd3da;transform:scaleX(0.900);">End Y</div>
<div class="t" style="left:106.5px;top:362.95px;font-size:8.2px;color:#eceef2;transform:scaleX(0.900);">*VARIES*</div>
<div class="a" style="left:22.5px;top:382.29999999999995px;width:181.1px;height:0.9px;background:#333945;"></div>
<div class="t" style="left:25.5px;top:374.85px;font-size:8.2px;color:#cfd3da;transform:scaleX(0.900);">End Z</div>
<div class="t" style="left:106.5px;top:374.85px;font-size:8.2px;color:#eceef2;transform:scaleX(0.900);">0</div>
<div class="a" style="left:22.5px;top:394.2px;width:181.1px;height:0.9px;background:#333945;"></div>
<div class="t" style="left:25.5px;top:386.75px;font-size:8.2px;color:#cfd3da;transform:scaleX(0.900);">Delta X</div>
<div class="t" style="left:106.5px;top:386.75px;font-size:8.2px;color:#8c929c;transform:scaleX(0.900);">17.508</div>
<div class="a" style="left:22.5px;top:406.09999999999997px;width:181.1px;height:0.9px;background:#333945;"></div>
<div class="t" style="left:25.5px;top:398.65px;font-size:8.2px;color:#cfd3da;transform:scaleX(0.900);">Delta Y</div>
<div class="t" style="left:106.5px;top:398.65px;font-size:8.2px;color:#8c929c;transform:scaleX(0.900);">0</div>
<div class="a" style="left:22.5px;top:417.99999999999994px;width:181.1px;height:0.9px;background:#333945;"></div>
<div class="t" style="left:25.5px;top:410.55px;font-size:8.2px;color:#cfd3da;transform:scaleX(0.900);">Delta Z</div>
<div class="t" style="left:106.5px;top:410.55px;font-size:8.2px;color:#8c929c;transform:scaleX(0.900);">0</div>
<div class="a" style="left:22.5px;top:429.9px;width:181.1px;height:0.9px;background:#333945;"></div>
<div class="t" style="left:25.5px;top:422.45px;font-size:8.2px;color:#cfd3da;transform:scaleX(0.900);">Length</div>
<div class="t" style="left:106.5px;top:422.45px;font-size:8.2px;color:#8c929c;transform:scaleX(0.900);">17.508</div>
<div class="a" style="left:22.5px;top:441.79999999999995px;width:181.1px;height:0.9px;background:#333945;"></div>
<div class="t" style="left:25.5px;top:434.35px;font-size:8.2px;color:#cfd3da;transform:scaleX(0.900);">Angle</div>
<div class="t" style="left:106.5px;top:434.35px;font-size:8.2px;color:#8c929c;transform:scaleX(0.900);">0</div>
<div class="a" style="left:0px;top:638px;width:212px;height:1.5px;background:#262a32;"></div>

<div id="vp"><svg width="987" height="526" viewBox="213 114 987 526" style="position:absolute;left:0;top:0">
<line x1="213" y1="285" x2="234" y2="285" stroke="#17509a" stroke-width="2"/>
<line x1="234" y1="284" x2="234" y2="335.5" stroke="#17509a" stroke-width="2"/>
<line x1="234" y1="346.7" x2="234" y2="410.5" stroke="#17509a" stroke-width="2"/>
<line x1="234" y1="422" x2="234" y2="486.4" stroke="#17509a" stroke-width="2"/>
<line x1="234" y1="497.8" x2="234" y2="561" stroke="#17509a" stroke-width="2"/>
<line x1="234" y1="579.5" x2="234" y2="607.5" stroke="#17509a" stroke-width="2"/>
<polyline points="389,254 358,254 358,341" fill="none" stroke="#880a10" stroke-width="2"/>
<line x1="358" y1="371" x2="358" y2="387" stroke="#880a10" stroke-width="2"/>
<line x1="358" y1="419" x2="358" y2="455.5" stroke="#880a10" stroke-width="2"/>
<line x1="358" y1="486.5" x2="358" y2="561" stroke="#880a10" stroke-width="2"/>
<polyline points="451,254 482,254 482,319.5" fill="none" stroke="#17509a" stroke-width="2"/>
<line x1="482" y1="330.5" x2="482" y2="395" stroke="#17509a" stroke-width="2"/>
<line x1="482" y1="406" x2="482" y2="504" stroke="#17509a" stroke-width="2"/>
<line x1="482" y1="515.5" x2="482" y2="561" stroke="#17509a" stroke-width="2"/>
<line x1="482" y1="579.5" x2="482" y2="607.5" stroke="#17509a" stroke-width="2"/>
<circle cx="420" cy="254" r="31.3" fill="none" stroke="#222" stroke-width="1.1"/>
<circle cx="420" cy="254" r="23.3" fill="none" stroke="#222" stroke-width="1.1"/>
<rect x="321" y="305.5" width="21.5" height="21.5" fill="none" stroke="#333" stroke-width="1.1"/>
<line x1="342.5" y1="316" x2="358" y2="316" stroke="#666" stroke-width="1.3"/>
<path d="M324.4,315.5 C326.0,313.0 328.5,313.0 330.0,317.5 C331.0,321.5 331.5,325.0 332.8,325.0 C334.8,325.0 335.6,320.5 335.6,315.0 C335.6,310.0 333.3,308.1 332.6,310.3 C332.0,312.7 335.0,315.1 340.3,315.4" fill="none" stroke="#222" stroke-width="1"/>
<rect x="350.3" y="340.6" width="15.4" height="30.7" fill="none" stroke="#333" stroke-width="1.1"/>
<line x1="365.7" y1="340.6" x2="350.3" y2="371.3" stroke="#222" stroke-width="1"/>
<circle cx="350" cy="371.5" r="3" fill="#222"/>
<circle cx="358" cy="403" r="16" fill="none" stroke="#222" stroke-width="1.1"/>
<polyline points="342.1,402.5 358,387 373.9,402.5" fill="none" stroke="#222" stroke-width="1.1"/>
<polygon points="350.4,455.5 365.7,455.5 358,471" fill="#fff" stroke="#222" stroke-width="1.1"/>
<polygon points="350.4,486.5 365.7,486.5 358,471" fill="#000"/>
<polygon points="373.7,463 373.7,479 358,471" fill="#000"/>
<circle cx="328.5" cy="471" r="14.3" fill="none" stroke="#222" stroke-width="1.1"/>
<polyline points="323.3,477 323.3,464.5 328.5,475 333.7,464.5 333.7,477" fill="none" stroke="#222" stroke-width="0.9"/>
<line x1="342.8" y1="471" x2="358" y2="471" stroke="#666" stroke-width="1.3"/>
<line x1="377" y1="471" x2="422" y2="471" stroke="#3214d6" stroke-width="3"/>
<line x1="433" y1="471" x2="482" y2="471" stroke="#3214d6" stroke-width="3"/>
<rect x="371" y="467.5" width="6.4" height="6.4" fill="#1e78e6" stroke="#1452a8" stroke-width="0.6"/>
<rect x="424.5" y="467.5" width="6.5" height="6.5" fill="#1e78e6" stroke="#0e2f66" stroke-width="1"/>
<circle cx="482" cy="471" r="5.3" fill="#1e78e6" stroke="#1452a8" stroke-width="0.8"/>
<polyline points="637,254 606,254 606,341" fill="none" stroke="#880a10" stroke-width="2"/>
<line x1="606" y1="371" x2="606" y2="387" stroke="#880a10" stroke-width="2"/>
<line x1="606" y1="419" x2="606" y2="455.5" stroke="#880a10" stroke-width="2"/>
<line x1="606" y1="486.5" x2="606" y2="561" stroke="#880a10" stroke-width="2"/>
<polyline points="699,254 730,254 730,319.5" fill="none" stroke="#17509a" stroke-width="2"/>
<line x1="730" y1="330.5" x2="730" y2="395" stroke="#17509a" stroke-width="2"/>
<line x1="730" y1="406" x2="730" y2="504" stroke="#17509a" stroke-width="2"/>
<line x1="730" y1="515.5" x2="730" y2="561" stroke="#17509a" stroke-width="2"/>
<line x1="730" y1="579.5" x2="730" y2="607.5" stroke="#17509a" stroke-width="2"/>
<circle cx="668" cy="254" r="31.3" fill="none" stroke="#222" stroke-width="1.1"/>
<circle cx="668" cy="254" r="23.3" fill="none" stroke="#222" stroke-width="1.1"/>
<rect x="569" y="305.5" width="21.5" height="21.5" fill="none" stroke="#333" stroke-width="1.1"/>
<line x1="590.5" y1="316" x2="606" y2="316" stroke="#666" stroke-width="1.3"/>
<path d="M572.4,315.5 C574.0,313.0 576.5,313.0 578.0,317.5 C579.0,321.5 579.5,325.0 580.8,325.0 C582.8,325.0 583.6,320.5 583.6,315.0 C583.6,310.0 581.3,308.1 580.6,310.3 C580.0,312.7 583.0,315.1 588.3,315.4" fill="none" stroke="#222" stroke-width="1"/>
<rect x="598.3" y="340.6" width="15.4" height="30.7" fill="none" stroke="#333" stroke-width="1.1"/>
<line x1="613.7" y1="340.6" x2="598.3" y2="371.3" stroke="#222" stroke-width="1"/>
<circle cx="598" cy="371.5" r="3" fill="#222"/>
<circle cx="606" cy="403" r="16" fill="none" stroke="#222" stroke-width="1.1"/>
<polyline points="590.1,402.5 606,387 621.9,402.5" fill="none" stroke="#222" stroke-width="1.1"/>
<polygon points="598.4,455.5 613.7,455.5 606,471" fill="#fff" stroke="#222" stroke-width="1.1"/>
<polygon points="598.4,486.5 613.7,486.5 606,471" fill="#000"/>
<polygon points="621.7,463 621.7,479 606,471" fill="#000"/>
<circle cx="576.5" cy="471" r="14.3" fill="none" stroke="#222" stroke-width="1.1"/>
<polyline points="571.3,477 571.3,464.5 576.5,475 581.7,464.5 581.7,477" fill="none" stroke="#222" stroke-width="0.9"/>
<line x1="590.8" y1="471" x2="606" y2="471" stroke="#666" stroke-width="1.3"/>
<line x1="625" y1="471" x2="670" y2="471" stroke="#3214d6" stroke-width="3"/>
<line x1="681" y1="471" x2="730" y2="471" stroke="#3214d6" stroke-width="3"/>
<rect x="619" y="467.5" width="6.4" height="6.4" fill="#1e78e6" stroke="#1452a8" stroke-width="0.6"/>
<rect x="672.5" y="467.5" width="6.5" height="6.5" fill="#1e78e6" stroke="#0e2f66" stroke-width="1"/>
<circle cx="730" cy="471" r="5.3" fill="#1e78e6" stroke="#1452a8" stroke-width="0.8"/>
<polyline points="885,254 854,254 854,341" fill="none" stroke="#880a10" stroke-width="2"/>
<line x1="854" y1="371" x2="854" y2="387" stroke="#880a10" stroke-width="2"/>
<line x1="854" y1="419" x2="854" y2="455.5" stroke="#880a10" stroke-width="2"/>
<line x1="854" y1="486.5" x2="854" y2="561" stroke="#880a10" stroke-width="2"/>
<polyline points="947,254 978,254 978,319.5" fill="none" stroke="#17509a" stroke-width="2"/>
<line x1="978" y1="330.5" x2="978" y2="395" stroke="#17509a" stroke-width="2"/>
<line x1="978" y1="406" x2="978" y2="504" stroke="#17509a" stroke-width="2"/>
<line x1="978" y1="515.5" x2="978" y2="561" stroke="#17509a" stroke-width="2"/>
<line x1="978" y1="579.5" x2="978" y2="607.5" stroke="#17509a" stroke-width="2"/>
<circle cx="916" cy="254" r="31.3" fill="none" stroke="#222" stroke-width="1.1"/>
<circle cx="916" cy="254" r="23.3" fill="none" stroke="#222" stroke-width="1.1"/>
<rect x="817" y="305.5" width="21.5" height="21.5" fill="none" stroke="#333" stroke-width="1.1"/>
<line x1="838.5" y1="316" x2="854" y2="316" stroke="#666" stroke-width="1.3"/>
<path d="M820.4,315.5 C822.0,313.0 824.5,313.0 826.0,317.5 C827.0,321.5 827.5,325.0 828.8,325.0 C830.8,325.0 831.6,320.5 831.6,315.0 C831.6,310.0 829.3,308.1 828.6,310.3 C828.0,312.7 831.0,315.1 836.3,315.4" fill="none" stroke="#222" stroke-width="1"/>
<rect x="846.3" y="340.6" width="15.4" height="30.7" fill="none" stroke="#333" stroke-width="1.1"/>
<line x1="861.7" y1="340.6" x2="846.3" y2="371.3" stroke="#222" stroke-width="1"/>
<circle cx="846" cy="371.5" r="3" fill="#222"/>
<circle cx="854" cy="403" r="16" fill="none" stroke="#222" stroke-width="1.1"/>
<polyline points="838.1,402.5 854,387 869.9,402.5" fill="none" stroke="#222" stroke-width="1.1"/>
<polygon points="846.4,455.5 861.7,455.5 854,471" fill="#fff" stroke="#222" stroke-width="1.1"/>
<polygon points="846.4,486.5 861.7,486.5 854,471" fill="#000"/>
<polygon points="869.7,463 869.7,479 854,471" fill="#000"/>
<circle cx="824.5" cy="471" r="14.3" fill="none" stroke="#222" stroke-width="1.1"/>
<polyline points="819.3,477 819.3,464.5 824.5,475 829.7,464.5 829.7,477" fill="none" stroke="#222" stroke-width="0.9"/>
<line x1="838.8" y1="471" x2="854" y2="471" stroke="#666" stroke-width="1.3"/>
<line x1="873" y1="471" x2="918" y2="471" stroke="#3214d6" stroke-width="3"/>
<line x1="929" y1="471" x2="978" y2="471" stroke="#3214d6" stroke-width="3"/>
<rect x="867" y="467.5" width="6.4" height="6.4" fill="#1e78e6" stroke="#1452a8" stroke-width="0.6"/>
<rect x="920.5" y="467.5" width="6.5" height="6.5" fill="#1e78e6" stroke="#0e2f66" stroke-width="1"/>
<circle cx="978" cy="471" r="5.3" fill="#1e78e6" stroke="#1452a8" stroke-width="0.8"/>
<rect x="213" y="561" width="795.7" height="18.3" fill="#fff"/>
<rect x="213" y="607.6" width="795.7" height="17.9" fill="#fff"/>
<path d="M213,561 H1008.7 V579.3" fill="none" stroke="#6a6a6a" stroke-width="1.6"/>
<path d="M213,579.3 H1008.7" fill="none" stroke="#2a2a2a" stroke-width="1.1"/>
<path d="M213,607.6 H1008.7 V625.5" fill="none" stroke="#2a2a2a" stroke-width="1.1"/>
<path d="M213,625.5 H1008.7" fill="none" stroke="#6a6a6a" stroke-width="1.6"/>
<line x1="492" y1="364.6" x2="572.6" y2="364.6" stroke="#222" stroke-width="1.1"/>
<line x1="532.5" y1="324.6" x2="532.5" y2="405" stroke="#222" stroke-width="1.1"/>
<circle cx="532.5" cy="364.6" r="2.2" fill="#fff" stroke="#222" stroke-width="1"/>

</svg></div>
<div class="a" style="left:0px;top:640px;width:1200px;height:35px;background:#ffffff;"></div>
<svg class="a" style="left:3px;top:643px;" width="30" height="30" viewBox="0 0 30 30"><circle cx="14.5" cy="14.5" r="13.6" fill="#1f4352" stroke="#10222b" stroke-width="1.3"/><path d="M9.8,7 L22.6,14.6 L9.8,22.2Z" fill="#f8f8f8" stroke="#0c1a20" stroke-width="0.9" stroke-linejoin="round"/></svg>
<div class="t" style="left:44.0px;top:653.78px;font-size:7.3px;color:#2a2a2a;transform:scaleX(0.892);-webkit-text-stroke:0">03:58 / 06:20</div>
<div class="a" style="left:96px;top:656px;width:577px;height:3px;background:#10232e;border-radius:1.5px"></div>
<div class="a" style="left:678px;top:656px;width:337px;height:3px;background:#d2d2d2;border-radius:1.5px"></div>
<svg class="a" style="left:667px;top:652px;" width="11" height="11" viewBox="0 0 11 11"><circle cx="5.5" cy="5.5" r="4.6" fill="#1d3947" stroke="#0c1a22" stroke-width="1"/></svg>
<svg class="a" style="left:1082.5px;top:649.2px;" width="16" height="16" viewBox="0 0 16 16"><polygon points="12.57,5.96 14.64,6.52 14.64,9.48 12.57,10.04 12.67,9.79 13.74,11.64 11.64,13.74 9.79,12.67 10.04,12.57 9.48,14.64 6.52,14.64 5.96,12.57 6.21,12.67 4.36,13.74 2.26,11.64 3.33,9.79 3.43,10.04 1.36,9.48 1.36,6.52 3.43,5.96 3.33,6.21 2.26,4.36 4.36,2.26 6.21,3.33 5.96,3.43 6.52,1.36 9.48,1.36 10.04,3.43 9.79,3.33 11.64,2.26 13.74,4.36 12.67,6.21" fill="none" stroke="#111" stroke-width="1.3" stroke-linejoin="round"/><path d="M9.6,7 A2,2 0 1 1 8,6" fill="none" stroke="#111" stroke-width="1.3"/></svg>
<svg class="a" style="left:1112px;top:652px;" width="21" height="11" viewBox="0 0 21 11"><path d="M1.5,1 V10 L9,5.5Z" fill="#fff" stroke="#aaa" stroke-width="1.1" stroke-linejoin="round"/><path d="M6.5,1 V10 L14,5.5Z" fill="#fff" stroke="#444" stroke-width="1.3" stroke-linejoin="round"/><path d="M11.5,1 V10 L19.5,5.5Z" fill="#fff" stroke="#111" stroke-width="1.5" stroke-linejoin="round"/></svg>
<svg class="a" style="left:1144px;top:649px;" width="18" height="17" viewBox="0 0 18 17"><path d="M2,6.5 H5 L11,2 V15 L5,10.5 H2Z" fill="none" stroke="#222" stroke-width="1.4"/><path d="M1.5,1.5 L16,16 M16,1.5 L1.5,16" stroke="#b84a5a" stroke-width="1.1"/></svg>
<svg class="a" style="left:1176px;top:650px;" width="16" height="16" viewBox="0 0 16 16"><path d="M2,14 L7,9 M3.5,9 H7 V12.5" stroke="#111" stroke-width="1.5" fill="none"/><path d="M14,2 L9,7 M12.5,7 H9 V3.5" stroke="#111" stroke-width="1.5" fill="none"/></svg>

<div class="t" style="left:215.0px;top:119.05px;font-size:8.2px;color:#1a1a1a;transform:scaleX(0.948);-webkit-text-stroke:0.1px #1a1a1a">[−][Top][2D Wireframe]</div>
<svg class="a" style="left:1160px;top:119px;" width="36" height="10" viewBox="0 0 36 10"><rect x="1.5" y="4.5" width="7.5" height="2.5" fill="#fff" stroke="#888" stroke-width="1"/><rect x="13.5" y="2.5" width="6" height="6" fill="#fff" stroke="#888" stroke-width="1.2"/><path d="M15.5,2.5 V0.8 H21 V6.5 H19.5" fill="none" stroke="#888" stroke-width="1.1"/><rect x="15.5" y="4.5" width="2" height="2" fill="#666"/><path d="M27,1.5 L33,8 M33,1.5 L27,8" stroke="#888" stroke-width="2.2"/><path d="M27,1.5 L33,8 M33,1.5 L27,8" stroke="#fff" stroke-width="0.8"/></svg>
<svg class="a" style="left:1112px;top:145px;overflow:visible" width="80" height="80" viewBox="0 0 80 80"><g transform="translate(0,0)"><rect x="20" y="19" width="32.5" height="32" fill="#f4f4f6" stroke="#8a8a8a" stroke-width="1.2"/><rect x="22.5" y="21.5" width="27.5" height="27" fill="#e6e6ea"/><rect x="26" y="25" width="20.5" height="20" fill="#e0e0e4"/><text x="36.3" y="38.6" font-family="Liberation Sans" font-size="9" fill="#4a4a4a" text-anchor="middle" transform="translate(36.3,0) scale(0.78,1) translate(-36.3,0)">TOP</text><text x="36" y="5.2" font-family="Liberation Sans" font-weight="bold" font-size="12" fill="#fff" stroke="#a8a8a8" stroke-width="0.8" text-anchor="middle">N</text><text x="0.5" y="40.5" font-family="Liberation Sans" font-weight="bold" font-size="12" fill="#fff" stroke="#a8a8a8" stroke-width="0.8" text-anchor="middle">W</text><text x="71" y="40.5" font-family="Liberation Sans" font-weight="bold" font-size="12" fill="#fff" stroke="#a8a8a8" stroke-width="0.8" text-anchor="middle">E</text><text x="36" y="75.5" font-family="Liberation Sans" font-weight="bold" font-size="12" fill="#fff" stroke="#a8a8a8" stroke-width="0.8" text-anchor="middle">S</text></g></svg>
<div class="a" style="left:1134px;top:235px;width:29px;height:10px;background:#eef0f4;border-radius:3px"></div>
<div class="t" style="left:1136.0px;top:236.83px;font-size:7px;color:#6a6a6a;transform:scaleX(0.857);">WCS</div>
<svg class="a" style="left:1153.5px;top:238.5px" width="5" height="3" viewBox="0 0 5 3"><polygon points="0,0 5,0 2.5,3" fill="#b8b8c0"/></svg>
<svg class="a" style="left:1176px;top:260px;" width="22" height="135" viewBox="0 0 22 135"><rect x="0.7" y="0.7" width="20.6" height="133.6" rx="3" fill="#fbfbfb" stroke="#cfcfcf" stroke-width="1.2"/><circle cx="11" cy="22" r="6.5" fill="none" stroke="#cfcfcf" stroke-width="1.2"/><circle cx="11" cy="22" r="3" fill="none" stroke="#d8d8d8"/><path d="M5,33 H17 M5,50 H17 M5,78 H17 M5,101 H17" stroke="#e2e2e2"/><path d="M6,46 V40 Q7,38 8,40 V36 Q9,34 10,36 V35 Q11,33 12,35 V36 Q13,34 14,36 V42 Q16,40 17,42 L13,49 H8Z" fill="none" stroke="#cfcfcf"/><path d="M5,55 L15,65 M15,55 L5,65" stroke="#d0d0d0"/><circle cx="14" cy="66" r="3" fill="none" stroke="#d0d0d0"/><path d="M11,82 V97 M6,90 H16" stroke="#d0d0d0" stroke-width="1.2"/><rect x="5" y="104" width="12" height="7" fill="none" stroke="#d8d8d8"/><rect x="5" y="113" width="12" height="10" fill="none" stroke="#d0d0d0"/><path d="M9,115 L14,118 L9,121Z" fill="#d0d0d0"/></svg>
<svg class="a" style="left:220px;top:592px;" width="50" height="48" viewBox="0 0 50 48"><path d="M6.5,17 V48" stroke="#222" stroke-width="1"/><path d="M8,6 L11.5,10.5 L15,6 M11.5,10.5 V15" stroke="#333" stroke-width="1" fill="none"/><path d="M40,40 L49,48 M49,40 L40,48" stroke="#222" stroke-width="1.2"/><path d="M3.5,48 V45 H9.5 V48" stroke="#333" fill="none"/></svg>
<div class="a" style="left:454px;top:614px;width:37px;height:9.5px;background:#777777;"></div>
<div class="t" style="left:455.5px;top:615.18px;font-size:7.5px;color:#ffffff;font-weight:bold;transform:scaleX(0.868);">Command:</div>
<div class="a" style="left:454px;top:626.5px;width:37px;height:9.5px;background:#555555;"></div>
<div class="t" style="left:455.5px;top:627.68px;font-size:7.5px;color:#ffffff;font-weight:bold;transform:scaleX(0.868);">Command:</div>
<div class="a" style="left:414px;top:637.5px;width:36px;height:2.5px;background:#4a505c;border-radius:1px"></div>
<svg class="a" style="left:450px;top:634px;" width="550" height="6" viewBox="0 0 550 6"><path d="M0,4.5 H545 Q548,4.5 549,6" stroke="#a8a8a8" stroke-width="1" fill="none"/></svg>

</body></html>
